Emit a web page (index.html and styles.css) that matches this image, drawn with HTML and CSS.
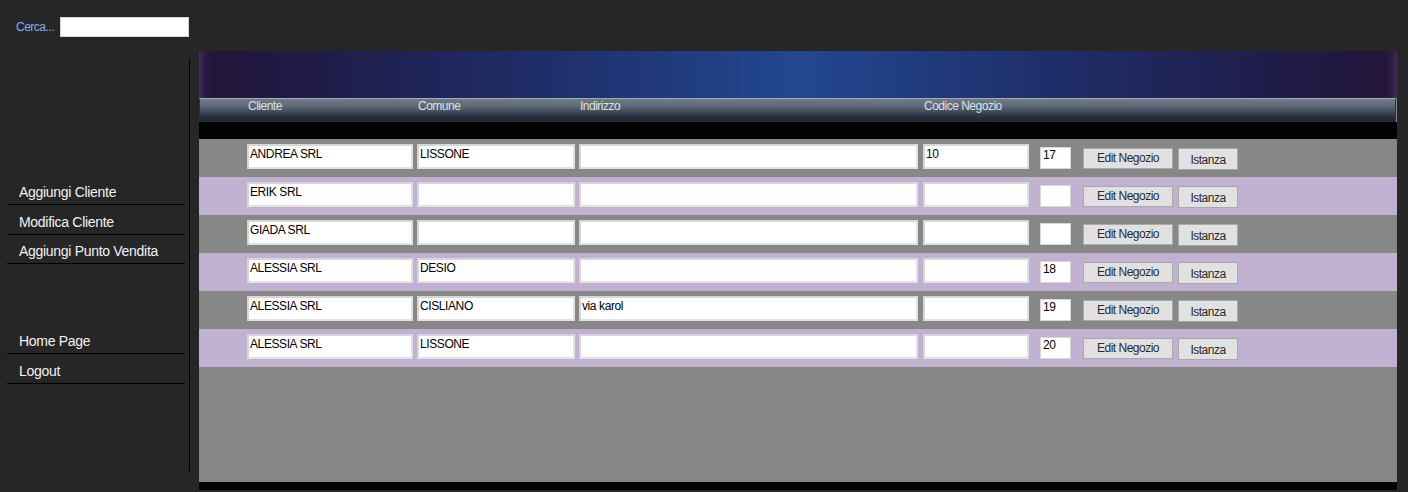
FILE: index.html
```html
<!DOCTYPE html>
<html lang="it">
<head>
<meta charset="UTF-8" />
<meta name="viewport" content="width=device-width, initial-scale=1" />
<title>Punti Vendita</title>
<link rel="stylesheet" href="styles.css">
</head>
<body>

<div class="top">
  <label class="cerca" for="cerca">Cerca...</label>
  <input type="text" id="cerca" class="cerca-input" />
</div>

<div class="layout">
  <div class="sidebar">
    <ul class="menu">
      <li><a>Aggiungi Cliente</a></li>
      <li><a>Modifica Cliente</a></li>
      <li class="corta"><a>Aggiungi Punto Vendita</a></li>
    </ul>
    <ul class="menu menu-bottom">
      <li><a>Home Page</a></li>
      <li><a>Logout</a></li>
    </ul>
  </div>

  <div class="panel">
    <div class="banner"></div>
    <div class="intestazione">
      <span class="col c1">Cliente</span>
      <span class="col c2">Comune</span>
      <span class="col c3">Indirizzo</span>
      <span class="col c4">Codice Negozio</span>
    </div>
    <div class="striscia"></div>

    <div class="righe">
      <div class="riga">
        <input class="campo c1" value="ANDREA SRL" />
        <input class="campo c2" value="LISSONE" />
        <input class="campo c3" value="" />
        <input class="campo c4" value="10" />
        <input class="id" value="17" />
        <button class="btn edit">Edit Negozio</button>
        <button class="btn istanza">Istanza</button>
      </div>
      <div class="riga alt">
        <input class="campo c1" value="ERIK SRL" />
        <input class="campo c2" value="" />
        <input class="campo c3" value="" />
        <input class="campo c4" value="" />
        <input class="id" value="" />
        <button class="btn edit">Edit Negozio</button>
        <button class="btn istanza">Istanza</button>
      </div>
      <div class="riga">
        <input class="campo c1" value="GIADA SRL" />
        <input class="campo c2" value="" />
        <input class="campo c3" value="" />
        <input class="campo c4" value="" />
        <input class="id" value="" />
        <button class="btn edit">Edit Negozio</button>
        <button class="btn istanza">Istanza</button>
      </div>
      <div class="riga alt">
        <input class="campo c1" value="ALESSIA SRL" />
        <input class="campo c2" value="DESIO" />
        <input class="campo c3" value="" />
        <input class="campo c4" value="" />
        <input class="id" value="18" />
        <button class="btn edit">Edit Negozio</button>
        <button class="btn istanza">Istanza</button>
      </div>
      <div class="riga">
        <input class="campo c1" value="ALESSIA SRL" />
        <input class="campo c2" value="CISLIANO" />
        <input class="campo c3" value="via karol" />
        <input class="campo c4" value="" />
        <input class="id" value="19" />
        <button class="btn edit">Edit Negozio</button>
        <button class="btn istanza">Istanza</button>
      </div>
      <div class="riga alt">
        <input class="campo c1" value="ALESSIA SRL" />
        <input class="campo c2" value="LISSONE" />
        <input class="campo c3" value="" />
        <input class="campo c4" value="" />
        <input class="id" value="20" />
        <button class="btn edit">Edit Negozio</button>
        <button class="btn istanza">Istanza</button>
      </div>
    </div>

    <div class="fondo"></div>
  </div>
</div>

</body>
</html>
```

FILE: styles.css
```css
body {
  background-color: #262626;
  margin: 0;
  font-family: "Liberation Sans", Arial, sans-serif;
  overflow: hidden;
}

.top {
  height: 51px;
  display: flex;
  align-items: center;
  padding-left: 16px;
  box-sizing: border-box;
  padding-top: 3px;
}

.cerca {
  color: #7fb0ea;
  font-size: 12px;
  letter-spacing: -0.5px;
  margin-right: 6px;
}

.cerca-input {
  width: 129px;
  height: 20px;
  box-sizing: border-box;
  border: 1px solid #d4d4d4;
  background: white;
  margin: 0;
  padding: 0 2px;
}

.layout {
  display: flex;
}

.sidebar {
  width: 190px;
  height: 412px;
  margin-top: 8px;
  border-right: 1px solid #000;
  padding-top: 116px;
  box-sizing: border-box;
}

.menu {
  list-style: none;
  margin: 0 0 0 7px;
  padding: 0;
  width: 178px;
}

.menu li {
  border-bottom: 1px solid #000;
  height: 30px;
  padding: 9px 0 0 12px;
  box-sizing: border-box;
}

.menu li.corta {
  height: 29px;
  padding-top: 8px;
}

.menu a {
  display: block;
  color: #f2f2f2;
  font-size: 14px;
  line-height: 16px;
  letter-spacing: -0.3px;
  cursor: pointer;
}

.menu-bottom {
  margin-top: 60px;
}

.panel {
  width: 1198px;
  margin-left: 9px;
  background-color: #878787;
}

.banner {
  height: 47px;
  background: linear-gradient(to right, #3e2e58 0, #2a1c42 6px, #23163a 14px, #201a45 8%, #1f2d68 28%, #224791 50%, #1f2d68 72%, #201a45 92%, #23163a calc(100% - 14px), #2a1c42 calc(100% - 6px), #3e2e58 100%);
}

.intestazione {
  height: 24px;
  display: flex;
  padding-left: 47px;
  box-sizing: border-box;
  border: 1px solid #27303c;
  border-top-color: #a3acb6;
  border-radius: 2px 2px 0 0;
  margin-right: 1px;
  background: linear-gradient(to bottom, #727c88 0, #606a77 30%, #485261 52%, #2c3545 76%, #1d2431 100%);
}

.intestazione .col {
  color: #dde1e8;
  font-size: 12px;
  line-height: 14px;
  letter-spacing: -0.5px;
  padding-left: 1px;
  box-sizing: border-box;
}

.c1 { width: 166px; margin-right: 4px; }
.c2 { width: 158px; margin-right: 4px; }
.c3 { width: 339px; margin-right: 5px; }
.c4 { width: 106px; }

.striscia {
  height: 17px;
  background-color: #020202;
}

.riga {
  height: 38px;
  display: flex;
  align-items: flex-start;
  padding: 5px 0 0 48px;
  box-sizing: border-box;
  background-color: #878787;
}

.riga.alt {
  background-color: #c0b1d1;
}

.campo {
  height: 25px;
  box-sizing: border-box;
  border: 2px solid #e2e2e2;
  border-top-color: #d6d6d6;
  border-left-color: #d6d6d6;
  background: white;
  margin-top: 0;
  margin-bottom: 0;
  margin-left: 0;
  padding: 0 1px 6px 1px;
  font-family: "Liberation Sans", Arial, sans-serif;
  font-size: 12px;
  letter-spacing: -0.4px;
  color: #000;
}

.id {
  width: 31px;
  height: 22px;
  box-sizing: border-box;
  margin: 3px 0 0 11px;
  border: 1px solid #d8d8d8;
  background: white;
  padding: 0 2px 6px 2px;
  font-family: "Liberation Sans", Arial, sans-serif;
  font-size: 12px;
  letter-spacing: -0.4px;
  color: #000;
}

.btn {
  height: 21px;
  box-sizing: border-box;
  background-color: #e1e1e1;
  border: 1px solid #a9a9a9;
  font-family: "Liberation Sans", Arial, sans-serif;
  font-size: 12px;
  letter-spacing: -0.5px;
  color: #2a2a2a;
  margin-top: 4px;
  padding: 0;
  cursor: pointer;
}

.btn.edit {
  width: 90px;
  margin-left: 12px;
  padding-bottom: 2px;
}

.btn.istanza {
  width: 60px;
  height: 22px;
  margin-left: 5px;
  padding-top: 2px;
}

.righe {
  height: 343px;
}

.fondo {
  height: 8px;
  background-color: #030303;
}
```
